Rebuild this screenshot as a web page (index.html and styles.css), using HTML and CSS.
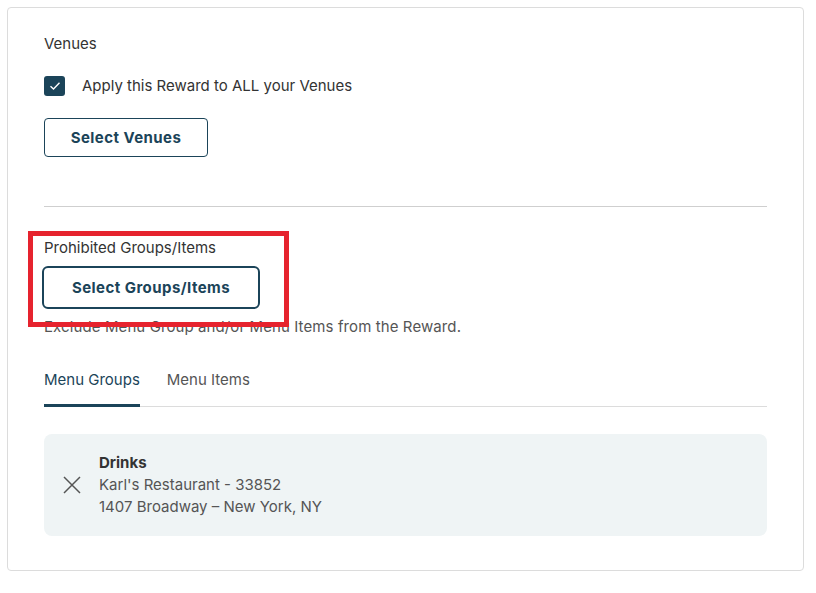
FILE: index.html
```html
<!DOCTYPE html>
<html>

<head>
  <meta charset="utf-8">
  <link rel="stylesheet" href="styles.css">
</head>

<body>
  <div class="card">
    <div class="label">Venues</div>

    <label class="check-row">
      <span class="checkbox">
        <svg width="12" height="10" viewBox="0 0 12 10"><path d="M1.5 5.2 L4.5 8 L10.5 1.8" fill="none" stroke="#fff" stroke-width="1.4"/></svg>
      </span>
      Apply this Reward to ALL your Venues
    </label>

    <button class="btn btn-venues">Select Venues</button>

    <hr class="divider">

    <div class="prohibited">
      <div class="label">Prohibited Groups/Items</div>
      <button class="btn btn-groups">Select Groups/Items</button>
      <div class="hint">Exclude Menu Group and/or Menu Items from the Reward.</div>
      <!-- annotation frame -->
      <div class="highlight"></div>
    </div>

    <div class="tabs">
      <div class="tab active">Menu Groups</div>
      <div class="tab">Menu Items</div>
    </div>

    <div class="item">
      <svg class="remove" width="18" height="18" viewBox="0 0 18 18"><path d="M1 1 L17 17 M17 1 L1 17" stroke="#555" stroke-width="1.5"/></svg>
      <div class="item-text">
        <div class="item-name">Drinks</div>
        <div>Karl's Restaurant - 33852</div>
        <div>1407 Broadway – New York, NY</div>
      </div>
    </div>
  </div>
</body>

</html>
```

FILE: styles.css
```css
* {
  box-sizing: border-box;
}

body {
  margin: 0;
  padding: 7px 12px 0 7px;
  font-family: Inter, "Liberation Sans", sans-serif;
  font-size: 15px;
  line-height: 22px;
  color: #333;
  background: #fff;
}

.card {
  border: 1px solid #dcdcdc;
  border-radius: 4px;
  padding: 25px 36px 34px 36px;
}

.label {
  color: #333;
}

.check-row {
  display: flex;
  align-items: center;
  gap: 17px;
  margin-top: 20px;
  color: #333;
}

.checkbox {
  width: 21px;
  height: 20px;
  border-radius: 3px;
  background: #1b4459;
  display: flex;
  align-items: center;
  justify-content: center;
}

.btn {
  display: block;
  font-family: inherit;
  font-size: 15px;
  font-weight: 700;
  letter-spacing: 0.45px;
  color: #1b4459;
  background: #fff;
  border: 1px solid #1b4459;
  border-radius: 4px;
  cursor: pointer;
}

.btn-venues {
  margin-top: 21px;
  width: 164px;
  height: 39px;
}

.divider {
  margin: 49px 0 0 0;
  border: 0;
  border-top: 1px solid #cfcfcf;
}

.prohibited {
  position: relative;
  margin-top: 30px;
}

.btn-groups {
  margin: 7px 0 0 -2px;
  width: 218px;
  height: 43px;
  border-width: 2px;
  border-radius: 6px;
}

.hint {
  margin-top: 7px;
  color: #555;
  letter-spacing: 0.1px;
}

.highlight {
  position: absolute;
  left: -16px;
  top: -6px;
  width: 261px;
  height: 96px;
  border: 5px solid #e6232e;
}

.tabs {
  display: flex;
  gap: 27px;
  margin-top: 31px;
  border-bottom: 1px solid #dcdcdc;
}

.tab {
  padding-bottom: 13px;
  color: #555;
  border-bottom: 3px solid transparent;
  margin-bottom: -1px;
}

.tab.active {
  color: #1b4459;
  border-bottom-color: #1b4459;
}

.item {
  display: flex;
  align-items: center;
  gap: 18px;
  margin-top: 27px;
  padding: 18px 19px;
  background: #eff4f5;
  border-radius: 8px;
  color: #555;
}

.remove {
  flex: none;
}

.item-name {
  font-weight: 700;
  color: #333;
}
```
